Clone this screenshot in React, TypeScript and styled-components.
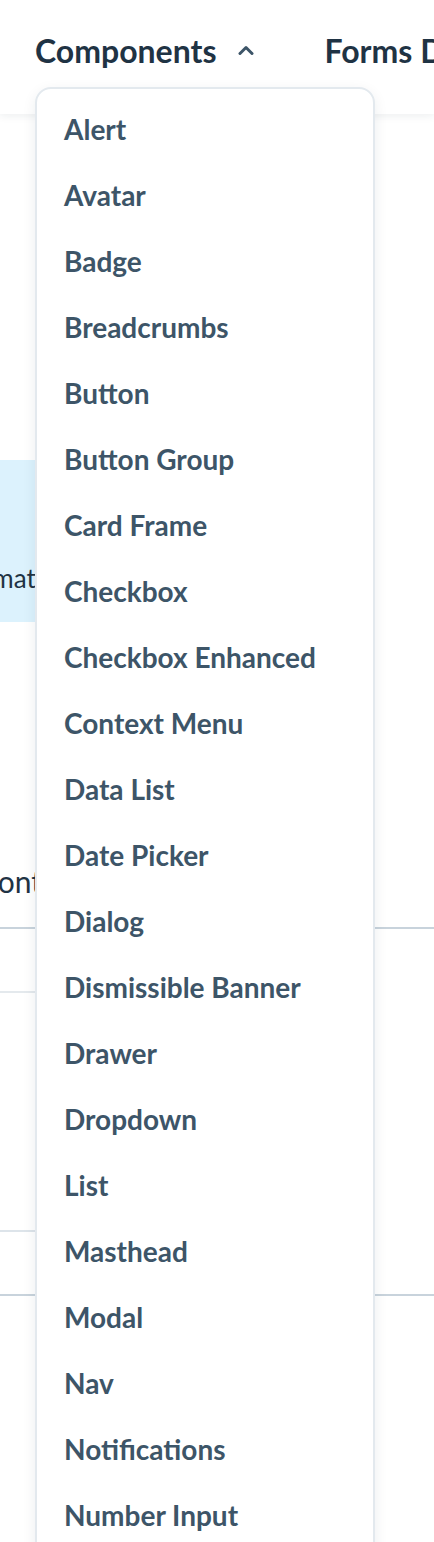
import * as React from "react";
import styled, { createGlobalStyle } from "styled-components";

const GlobalStyle = createGlobalStyle`
  html, body {
    margin: 0;
    padding: 0;
    background: #ffffff;
    overflow: hidden;
  }
  body {
    font-family: Lato, "Noto Sans", "Liberation Sans", sans-serif;
    color: #1f3344;
  }
  * {
    box-sizing: border-box;
  }
`;

const Page = styled.div`
  position: relative;
  width: 434px;
  height: 1542px;
  overflow: hidden;
`;

const Header = styled.header`
  position: relative;
  z-index: 2;
  height: 114px;
  padding: 31px 0 0 35px;
  background: #ffffff;
  box-shadow: 0 2px 8px rgba(30, 50, 70, 0.08);
`;

const Nav = styled.nav`
  display: flex;
  align-items: flex-start;
  gap: 71px;
  white-space: nowrap;
`;

const NavItem = styled.div`
  position: relative;
  display: flex;
  align-items: center;
  gap: 21px;
  font-size: 32px;
  line-height: 40px;
  font-weight: 700;
  color: #1f3344;
`;

const Chevron = styled.svg`
  width: 16px;
  height: 10px;
  margin-top: -3px;
  color: #3d5568;
`;

// dropdown panel hanging from the nav item, runs past the bottom of the view
const Menu = styled.ul`
  position: absolute;
  top: 56px;
  left: 0;
  width: 340px;
  height: 1500px;
  margin: 0;
  padding: 7px 0 0;
  list-style: none;
  background: #ffffff;
  border: 2px solid #e3e9ee;
  border-radius: 16px;
  box-shadow: 0 4px 14px rgba(30, 50, 70, 0.08);
`;

const MenuItem = styled.li`
  padding-left: 27px;
  font-size: 28px;
  line-height: 66px;
  font-weight: 700;
  color: #3d5568;
`;

const Main = styled.main`
  display: flex;
  flex-direction: column;
  margin-left: -62px;
  padding-top: 346px;
`;

const InfoBox = styled.div`
  height: 162px;
  padding-top: 101px;
  margin-right: 60px;
  background: #dcf2fd;
`;

const InfoText = styled.p`
  margin: 0;
  font-size: 26px;
  line-height: 34px;
  color: #1f3344;
`;

const Heading = styled.h2`
  margin: 241px 0 28px;
  padding-left: 40px;
  font-size: 30px;
  line-height: 36px;
  font-weight: 400;
  color: #1f3344;
`;

const Divider = styled.hr<{ $gap: number }>`
  margin: ${(p) => p.$gap}px 0 0;
  border: 0;
  height: 2px;
  background: #c8d3dc;
`;

const Card = styled.section`
  height: 241px;
  margin: 62px 120px 0 0;
  border-top: 2px solid #e4e9ed;
  border-bottom: 2px solid #dde4ea;
`;

const components = [
  "Alert",
  "Avatar",
  "Badge",
  "Breadcrumbs",
  "Button",
  "Button Group",
  "Card Frame",
  "Checkbox",
  "Checkbox Enhanced",
  "Context Menu",
  "Data List",
  "Date Picker",
  "Dialog",
  "Dismissible Banner",
  "Drawer",
  "Dropdown",
  "List",
  "Masthead",
  "Modal",
  "Nav",
  "Notifications",
  "Number Input",
  "Pagination",
  "Progress",
];

const App = () => {
  return (
    <>
      <GlobalStyle />
      <Page>
        <Header>
          <Nav>
            <NavItem>
              <span>Components</span>
              <Chevron viewBox="0 0 16 10" fill="none">
                <polyline
                  points="2,8.5 8,2.5 14,8.5"
                  stroke="currentColor"
                  strokeWidth="3"
                  strokeLinecap="round"
                  strokeLinejoin="round"
                />
              </Chevron>
              <Menu>
                {components.map((name) => (
                  <MenuItem key={name}>{name}</MenuItem>
                ))}
              </Menu>
            </NavItem>
            <NavItem>
              <span>Forms Demo</span>
            </NavItem>
          </Nav>
        </Header>
        <Main>
          <InfoBox>
            <InfoText>Information about this component</InfoText>
          </InfoBox>
          <Heading>Content guidelines</Heading>
          <Divider $gap={0} />
          <Card />
          <Divider $gap={62} />
        </Main>
      </Page>
    </>
  );
};

export default App;
